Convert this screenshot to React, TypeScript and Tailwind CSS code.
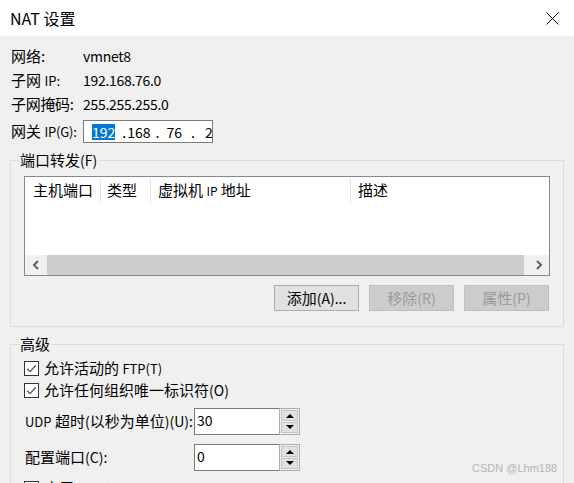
import React from "react";

function CheckBox({ checked = true }: { checked?: boolean }) {
  return (
    <span className="flex h-[15px] w-[15px] shrink-0 items-center justify-center border border-[#333333] bg-white">
      {checked && (
        <svg width="13" height="13" viewBox="0 0 13 13">
          <path d="M2.2 6.8 L5 9.6 L10.8 3.2" fill="none" stroke="#555555" strokeWidth="1.3" />
        </svg>
      )}
    </span>
  );
}

function Spin({ v }: { v: string }) {
  return (
    <div className="flex h-[27px] shrink-0">
      <div className="w-[85px] border border-r-0 border-[#7a7a7a] bg-white pl-[2px] pt-[1px] text-[14px] leading-[20px] text-black">
        {v}
      </div>
      <div className="flex w-[21px] flex-col gap-[1px] border border-[#adadad] bg-[#f0f0f0] p-[1px]">
        <div className="flex flex-1 items-center justify-center border border-[#c4c4c4] bg-[#e1e1e1]">
          <svg width="8" height="5" viewBox="0 0 8 5">
            <path d="M0 5 L4 1 L8 5 Z" fill="#000" />
          </svg>
        </div>
        <div className="flex flex-1 items-center justify-center border border-[#c4c4c4] bg-[#e1e1e1]">
          <svg width="8" height="5" viewBox="0 0 8 5">
            <path d="M0 0 L8 0 L4 4 Z" fill="#000" />
          </svg>
        </div>
      </div>
    </div>
  );
}

function Chevron({ dir }: { dir: "l" | "r" }) {
  return (
    <svg width="8" height="10" viewBox="0 0 8 10">
      <path
        d={dir === "l" ? "M6 1 L2 5 L6 9" : "M2 1 L6 5 L2 9"}
        fill="none"
        stroke="#606060"
        strokeWidth="2"
      />
    </svg>
  );
}

export default function App() {
  return (
    <div className="relative h-[483px] w-[574px] overflow-hidden bg-[#f0f0f0] font-['Noto_Sans_CJK_SC','Noto_Sans',sans-serif] text-black">
      {/* Title bar */}
      <div className="flex h-[36px] items-center justify-between bg-white pl-[10px] pr-[15px]">
        <span className="text-[16px] leading-[20px]">NAT 设置</span>
        <svg width="13" height="13" viewBox="0 0 13 13">
          <path d="M0.5 0.5 L12.5 12.5 M12.5 0.5 L0.5 12.5" stroke="#000" strokeWidth="1" />
        </svg>
      </div>

      {/* Info rows */}
      <div className="flex flex-col pl-[11px] pt-[8px]">
        <div className="flex h-[24px] items-center">
          <span className="w-[72px] shrink-0 whitespace-nowrap text-[15px]">网络:</span>
          <span className="text-[14px] tracking-[-0.3px]">vmnet8</span>
        </div>
        <div className="flex h-[24px] items-center">
          <span className="w-[72px] shrink-0 whitespace-nowrap text-[15px]">
            子网 <span className="text-[13px]">IP:</span>
          </span>
          <span className="text-[14px] tracking-[-0.3px]">192.168.76.0</span>
        </div>
        <div className="flex h-[24px] items-center">
          <span className="w-[72px] shrink-0 whitespace-nowrap text-[15px] tracking-[-0.3px]">子网掩码:</span>
          <span className="text-[14px] tracking-[-0.3px]">255.255.255.0</span>
        </div>
        <div className="mt-[4px] flex h-[23px] items-center">
          <span className="w-[72px] shrink-0 whitespace-nowrap text-[15px]">
            网关 <span className="text-[13px] tracking-[-0.2px]">IP(G):</span>
          </span>
          <div className="flex h-[23px] w-[130px] shrink-0 items-center border border-[#7a7a7a] bg-white text-[14px] leading-[14px]">
            <span className="ml-[8px] bg-[#0078d7] py-[1px] text-white">192</span>
            <span className="h-[14px] w-[1px] bg-[#e89a1c]" />
            <span className="ml-[7px]">.</span>
            <span className="ml-[1px]">168</span>
            <span className="ml-[5px]">.</span>
            <span className="ml-[7px]">76</span>
            <span className="ml-[9px]">.</span>
            <span className="ml-[10px]">2</span>
          </div>
        </div>
      </div>

      {/* Port forwarding */}
      <fieldset className="mx-[10px] mt-[8px] min-w-0 border border-[#dcdcdc]">
        <legend className="ml-[8px] px-[1px] text-[15px] leading-[18px]">
          端口转发<span className="text-[14px]">(F)</span>
        </legend>
        <div className="px-[13px] pb-[15px] pt-[7px]">
          <div className="flex h-[100px] flex-col border border-[#828790] bg-white">
            <div className="flex h-[26px] items-center whitespace-nowrap text-[15px]">
              <span className="w-[75px] pl-[8px]">主机端口</span>
              <span className="h-[24px] w-[1px] bg-[#e5e5e5]" />
              <span className="w-[49px] pl-[6px]">类型</span>
              <span className="h-[24px] w-[1px] bg-[#e5e5e5]" />
              <span className="w-[199px] pl-[7px]">
                虚拟机 <span className="text-[12px]">IP</span> 地址
              </span>
              <span className="h-[24px] w-[1px] bg-[#e5e5e5]" />
              <span className="pl-[7px]">描述</span>
            </div>
            <div className="flex-1" />
            <div className="flex h-[20px] bg-[#f0f0f0]">
              <div className="flex w-[21px] items-center justify-center">
                <Chevron dir="l" />
              </div>
              <div className="ml-[1px] w-[477px] bg-[#cdcdcd]" />
              <div className="flex-1" />
              <div className="flex w-[21px] items-center justify-center">
                <Chevron dir="r" />
              </div>
            </div>
          </div>
          <div className="mt-[9px] flex justify-end gap-[10px] pr-[1px] text-[15px]">
            <button className="h-[26px] w-[85px] whitespace-nowrap border border-[#adadad] bg-[#e1e1e1] leading-[24px] text-black">
              添加<span className="text-[14px]">(A)...</span>
            </button>
            <button className="h-[26px] w-[85px] whitespace-nowrap border border-[#bfbfbf] bg-[#cccccc] leading-[24px] text-[#9a9a9a]">
              移除<span className="text-[14px]">(R)</span>
            </button>
            <button className="h-[26px] w-[85px] whitespace-nowrap border border-[#bfbfbf] bg-[#cccccc] leading-[24px] text-[#9a9a9a]">
              属性<span className="text-[14px]">(P)</span>
            </button>
          </div>
        </div>
      </fieldset>

      {/* Advanced */}
      <fieldset className="mx-[10px] mt-[8px] min-w-0 border border-[#dcdcdc]">
        <legend className="ml-[8px] px-[1px] text-[15px] leading-[18px]">高级</legend>
        <div className="flex flex-col px-[13px] pt-[4px] text-[15px]">
          <div className="flex h-[22px] items-center gap-[5px] whitespace-nowrap">
            <CheckBox />
            <span>
              允许活动的 <span className="text-[13px]">FTP(T)</span>
            </span>
          </div>
          <div className="flex h-[22px] items-center gap-[5px] whitespace-nowrap">
            <CheckBox />
            <span>
              允许任何组织唯一标识符<span className="text-[14px]">(O)</span>
            </span>
          </div>
          <div className="mt-[7px] flex items-center">
            <span className="w-[170px] shrink-0 whitespace-nowrap pl-[1px]">
              <span className="text-[13px]">UDP</span> 超时<span className="text-[14px]">(</span>以秒为单位
              <span className="text-[14px]">)(U):</span>
            </span>
            <Spin v="30" />
          </div>
          <div className="mt-[9px] flex items-center">
            <span className="w-[170px] shrink-0 whitespace-nowrap pl-[1px]">
              配置端口<span className="text-[14px]">(C):</span>
            </span>
            <Spin v="0" />
          </div>
          <div className="mt-[6px] flex h-[22px] items-center gap-[5px] whitespace-nowrap">
            <CheckBox checked={false} />
            <span>
              启用 <span className="text-[14px]">IPv6(E)</span>
            </span>
          </div>
          <div className="h-[40px]" />
        </div>
      </fieldset>

      {/* Watermark */}
      <div className="absolute left-[472px] top-[460px] font-['Liberation_Sans',sans-serif] text-[11px] leading-[16px] text-[#b4b4b4]">
        CSDN @Lhm188
      </div>
    </div>
  );
}
